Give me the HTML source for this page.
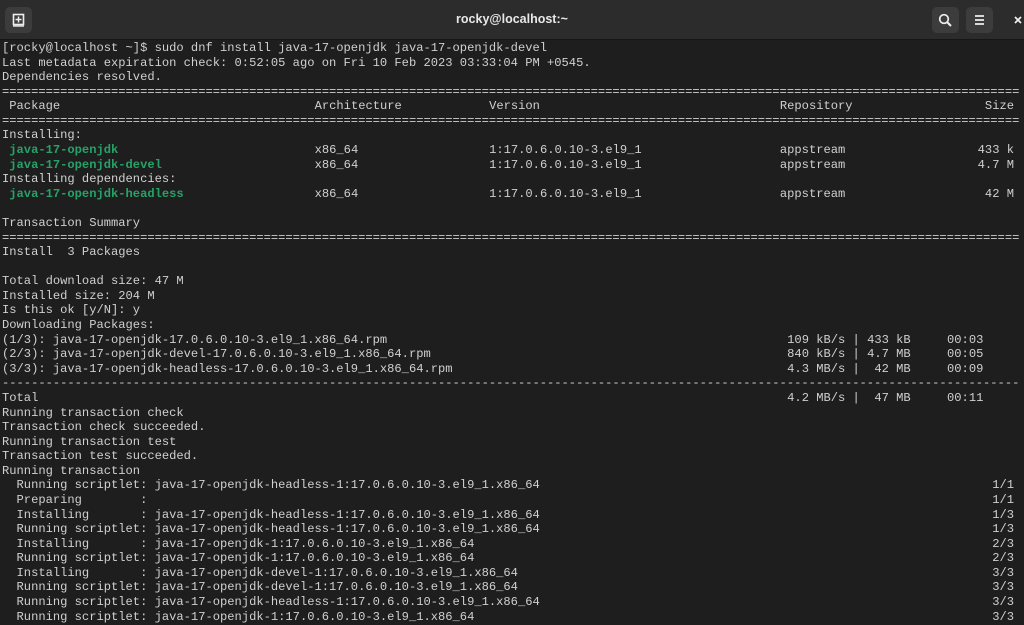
<!DOCTYPE html>
<html><head><meta charset="utf-8"><style>
body{margin:0;width:1024px;height:624px;background:#1e1e1e;overflow:hidden;position:relative;font-family:"Liberation Mono",monospace;}
#tb{position:absolute;left:0;top:0;width:1024px;height:39px;background:#2c2c2c;border-bottom:1px solid #161616;}
.btn{position:absolute;top:7px;width:27px;height:26px;background:#3c3c3c;border-radius:5px;}
#title{position:absolute;top:12px;left:0;width:1024px;text-align:center;color:#e8e8e8;font:bold 12.5px "Liberation Sans",sans-serif;}
.l{position:absolute;left:2px;height:15px;white-space:pre;color:#d0d0d0;font-size:12.12px;line-height:15px;}
.s{position:absolute;white-space:pre;top:0;}
.r{position:absolute;white-space:pre;top:0;right:0;}
.g{color:#26a269;font-weight:bold;}
</style></head><body>
<div id="tb">
<div class="btn" style="left:5px"><svg width="27" height="26"><rect x="8.5" y="7.5" width="10" height="10" fill="none" stroke="#eee" stroke-width="1.6"/><line x1="13.5" y1="9.5" x2="13.5" y2="15.5" stroke="#eee" stroke-width="1.5"/><line x1="10.5" y1="12.5" x2="16.5" y2="12.5" stroke="#eee" stroke-width="1.5"/><line x1="8" y1="19" x2="19" y2="19" stroke="#eee" stroke-width="1.4"/></svg></div>
<div id="title">rocky@localhost:~</div>
<div class="btn" style="left:932px"><svg width="27" height="26"><circle cx="12" cy="12" r="4.3" fill="none" stroke="#eee" stroke-width="1.7"/><line x1="15" y1="15" x2="19" y2="19" stroke="#eee" stroke-width="2"/></svg></div>
<div class="btn" style="left:966px"><svg width="27" height="26"><path d="M9 9h9M9 13h9M9 17h9" stroke="#eee" stroke-width="1.7"/></svg></div>
<svg style="position:absolute;left:1014px;top:16px" width="9" height="9"><path d="M1 1L7 7M7 1L1 7" stroke="#eee" stroke-width="1.7"/></svg>
</div>
<div id="t"></div>
<script>
function C(n){return n*7.27;}
var eq="=".repeat(140),da="-".repeat(140);
var lines=[
"[rocky@localhost ~]$ sudo dnf install java-17-openjdk java-17-openjdk-devel",
"Last metadata expiration check: 0:52:05 ago on Fri 10 Feb 2023 03:33:04 PM +0545.",
"Dependencies resolved.",
eq,
[" Package",[43,"Architecture"],[67,"Version"],[107,"Repository"],["R","Size"]],
eq,
"Installing:",
[["G"," java-17-openjdk"],[43,"x86_64"],[67,"1:17.0.6.0.10-3.el9_1"],[107,"appstream"],["R","433 k"]],
[["G"," java-17-openjdk-devel"],[43,"x86_64"],[67,"1:17.0.6.0.10-3.el9_1"],[107,"appstream"],["R","4.7 M"]],
"Installing dependencies:",
[["G"," java-17-openjdk-headless"],[43,"x86_64"],[67,"1:17.0.6.0.10-3.el9_1"],[107,"appstream"],["R","42 M"]],
"",
"Transaction Summary",
eq,
"Install  3 Packages",
"",
"Total download size: 47 M",
"Installed size: 204 M",
"Is this ok [y/N]: y",
"Downloading Packages:",
["(1/3): java-17-openjdk-17.0.6.0.10-3.el9_1.x86_64.rpm",[108,"109 kB/s | 433 kB     00:03"]],
["(2/3): java-17-openjdk-devel-17.0.6.0.10-3.el9_1.x86_64.rpm",[108,"840 kB/s | 4.7 MB     00:05"]],
["(3/3): java-17-openjdk-headless-17.0.6.0.10-3.el9_1.x86_64.rpm",[108,"4.3 MB/s |  42 MB     00:09"]],
da,
["Total",[108,"4.2 MB/s |  47 MB     00:11"]],
"Running transaction check",
"Transaction check succeeded.",
"Running transaction test",
"Transaction test succeeded.",
"Running transaction",
["  Running scriptlet: java-17-openjdk-headless-1:17.0.6.0.10-3.el9_1.x86_64",["R","1/1"]],
["  Preparing        :",["R","1/1"]],
["  Installing       : java-17-openjdk-headless-1:17.0.6.0.10-3.el9_1.x86_64",["R","1/3"]],
["  Running scriptlet: java-17-openjdk-headless-1:17.0.6.0.10-3.el9_1.x86_64",["R","1/3"]],
["  Installing       : java-17-openjdk-1:17.0.6.0.10-3.el9_1.x86_64",["R","2/3"]],
["  Running scriptlet: java-17-openjdk-1:17.0.6.0.10-3.el9_1.x86_64",["R","2/3"]],
["  Installing       : java-17-openjdk-devel-1:17.0.6.0.10-3.el9_1.x86_64",["R","3/3"]],
["  Running scriptlet: java-17-openjdk-devel-1:17.0.6.0.10-3.el9_1.x86_64",["R","3/3"]],
["  Running scriptlet: java-17-openjdk-headless-1:17.0.6.0.10-3.el9_1.x86_64",["R","3/3"]],
["  Running scriptlet: java-17-openjdk-1:17.0.6.0.10-3.el9_1.x86_64",["R","3/3"]]
];
var h="";
function esc(s){return s.replace(/&/g,"&amp;").replace(/</g,"&lt;");}
lines.forEach(function(ln,i){
 var top=41+i*14.58;
 h+='<div class="l" style="top:'+top+'px;width:1012px">';
 if(typeof ln==="string"){h+=esc(ln);}
 else ln.forEach(function(p){
  if(typeof p==="string")h+='<span class="s" style="left:0">'+esc(p)+'</span>';
  else if(p[0]==="R")h+='<span class="r">'+esc(p[1])+'</span>';
  else if(p[0]==="G")h+='<span class="s g" style="left:0">'+esc(p[1])+'</span>';
  else h+='<span class="s" style="left:'+C(p[0])+'px">'+esc(p[1])+'</span>';
 });
 h+='</div>';
});
document.getElementById("t").innerHTML=h;
</script>
</body></html>
